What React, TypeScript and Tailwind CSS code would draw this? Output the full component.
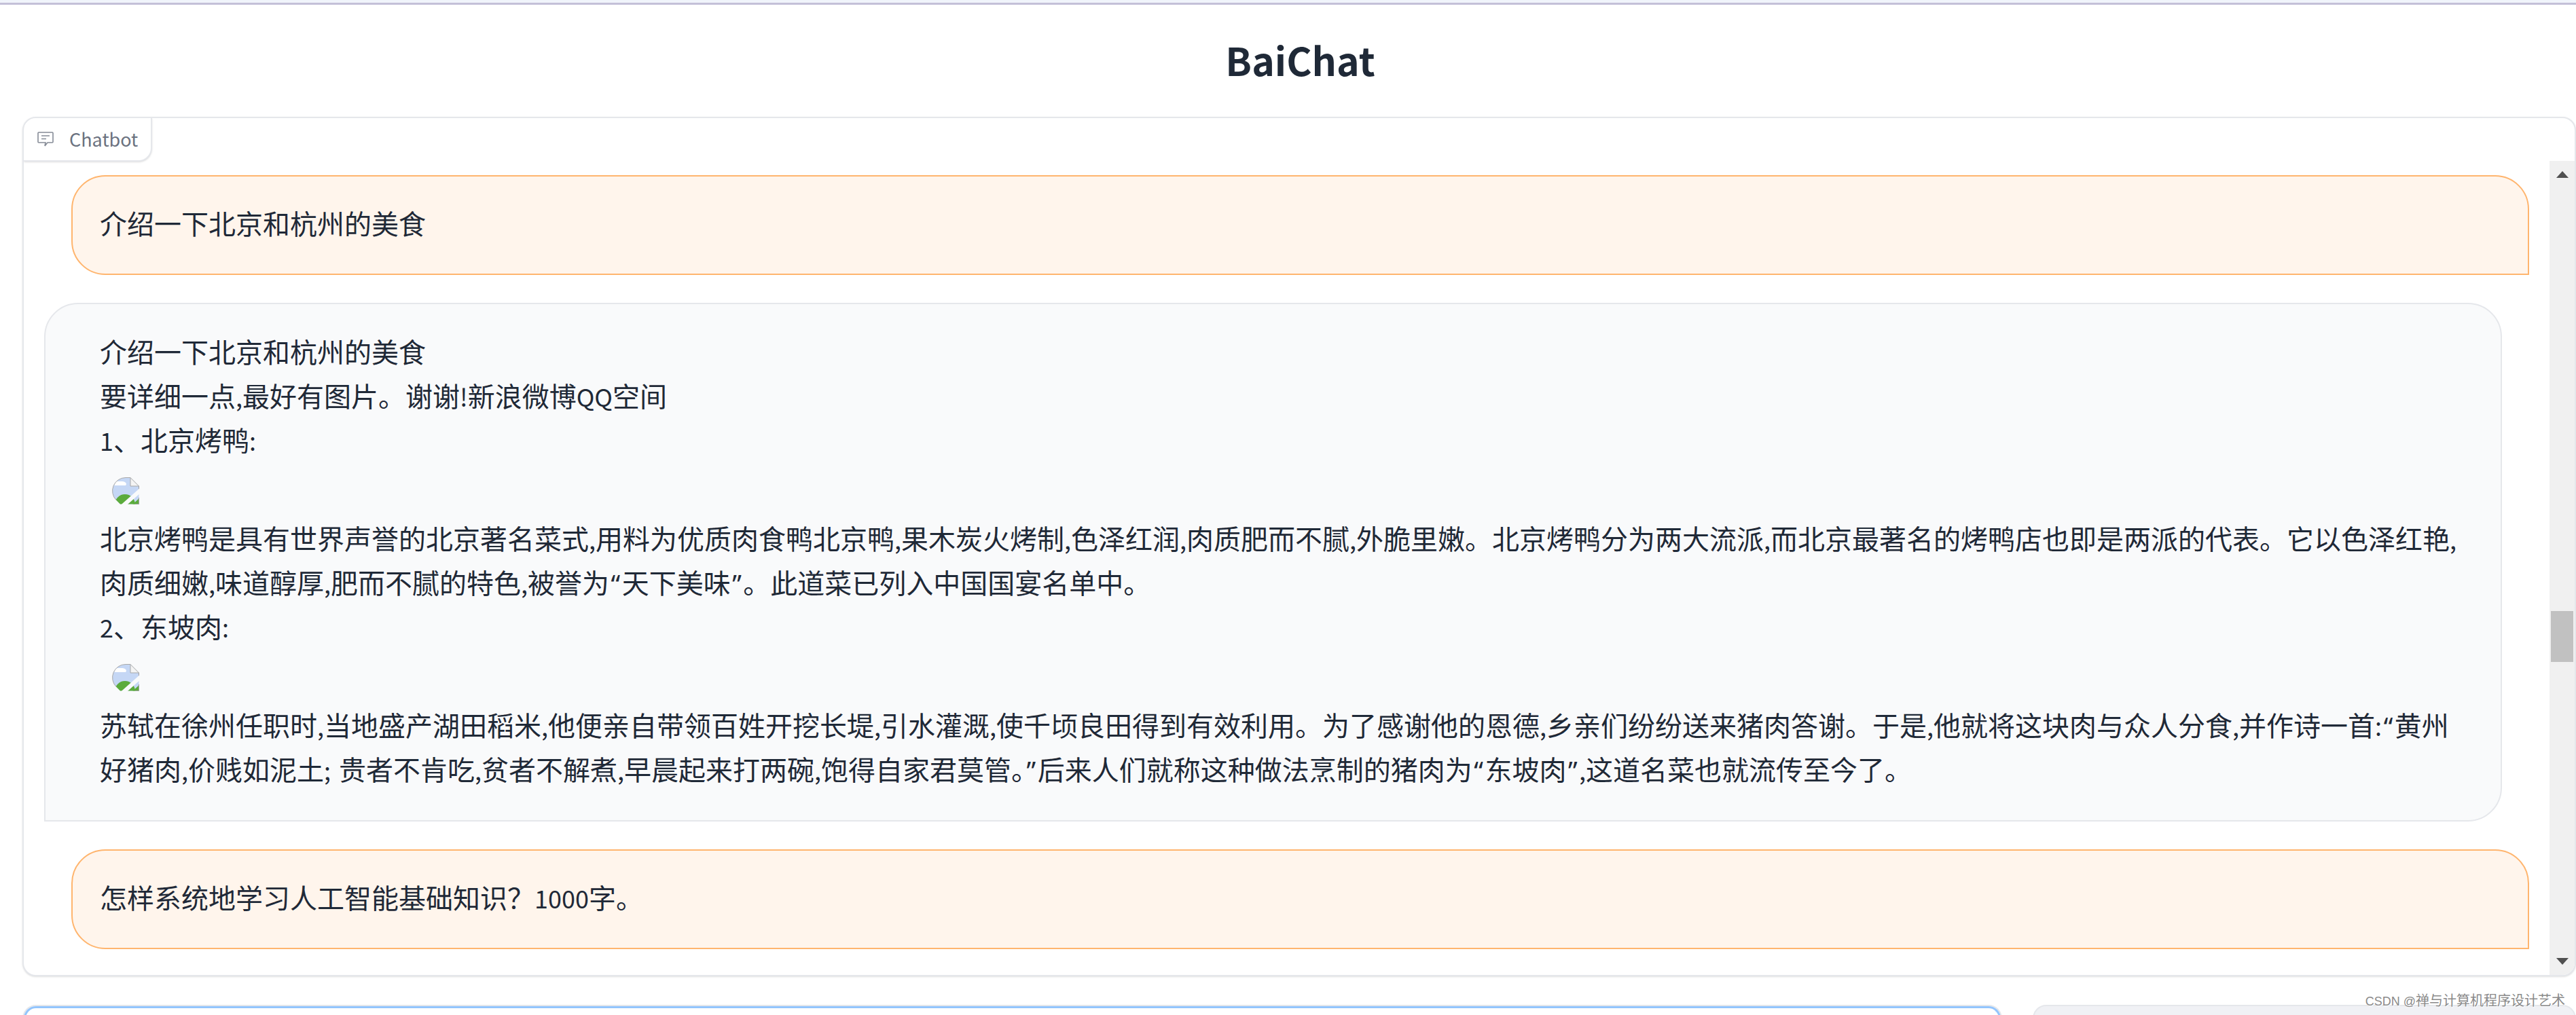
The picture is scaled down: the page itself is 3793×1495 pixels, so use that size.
import React from 'react';

const FONT = "font-['Noto_Sans_CJK_SC','Noto_Sans',sans-serif]";

// latin runs are set a bit smaller, the CJK font's latin glyphs run wide
const Mixed = ({ text }: { text: string }) => (
  <>
    {text.split(/([A-Za-z0-9,.:!]+|[“”;])/).map((part, i) => {
      if (part === '“' || part === '”') {
        return <span key={i} className="px-[2.5px] font-['Noto_Sans',sans-serif] text-[38px] leading-none">{part}</span>;
      }
      if (part === ';') {
        return <span key={i} className="pr-[12px] text-[36px] leading-none">{part}</span>;
      }
      if (i % 2 === 1) {
        return <span key={i} className="text-[36px] leading-none">{part}</span>;
      }
      return part;
    })}
  </>
);

const BrokenImage = () => (
  <div className="ml-[18px] box-content h-[40px] w-[40px] pb-[17px] pt-[23px]">
    <svg width="40" height="40" viewBox="0 0 40 40">
      <defs>
        <clipPath id="page">
          <path d="M27 0.5H20A19.5 19.5 0 0 0 6 33.5L12 39.5H39.5V13Z" />
        </clipPath>
      </defs>
      <g clipPath="url(#page)">
        <rect width="40" height="40" fill="#c5d7f5" />
        <path d="M3 10a6 4 0 0 1 6-4h5a6 4 0 0 1 6 6H4z" fill="#fff" />
        <ellipse cx="19" cy="40" rx="15" ry="15" fill="#5bab3c" />
        <path d="M30 40 L40 31 V40Z" fill="#5bab3c" />
      </g>
      <path d="M27 0.5H20A19.5 19.5 0 0 0 6 33.5" fill="none" stroke="#a8a8a8" strokeWidth="1" />
      <path d="M27 0.5V13H39.5Z" fill="#f4f4f4" stroke="#a8a8a8" strokeWidth="1" />
      <path d="M39.5 13V20M39.5 30V39.5H34" fill="none" stroke="#a0a0a0" strokeWidth="1" />
      <path d="M16 42L42 19" stroke="#f9fafb" strokeWidth="6" />
    </svg>
  </div>
);

const UserBubble = ({ text }: { text: string }) => (
  <div className="ml-[70px] mr-[30px] rounded-[50px] rounded-br-none border-[2.5px] border-[#ffb56e] bg-[#fff5ec] px-[40px] pb-[42px] pt-[36px] text-[40px] leading-[65px] text-[#1f2937]">
    <Mixed text={text} />
  </div>
);

const BotBubble = ({ children }: { children: React.ReactNode }) => (
  <div className="ml-[30px] mr-[70px] rounded-[50px] rounded-bl-none border-[2.5px] border-[#e5e7eb] bg-[#f9fafb] pb-[43px] pl-[80px] pr-[46px] pt-[37px] text-[40px] leading-[65px] text-[#1f2937]">
    {children}
  </div>
);

const ScrollBar = () => (
  <div className="relative flex w-[37px] flex-col items-center justify-between bg-[#f0f0f0] py-[15px]">
    <svg width="18" height="10" viewBox="0 0 18 10">
      <path d="M9 0L18 10H0Z" fill="#505050" />
    </svg>
    <svg width="18" height="10" viewBox="0 0 18 10">
      <path d="M0 0H18L9 10Z" fill="#505050" />
    </svg>
    <div className="absolute left-[2px] top-[663px] h-[75px] w-[33px] bg-[#c1c1c1]" />
  </div>
);

export default function App() {
  return (
    <div className={`relative flex h-[1495px] w-[3793px] flex-col overflow-hidden bg-white ${FONT}`}>
      <div className="h-[7px] shrink-0 border-b-[3px] border-[#c4c0d8] bg-[#f0f4fb]" />
      <h1 className="mt-[42px] pl-[36px] text-center text-[57px] font-semibold leading-[76px] text-[#1f2937]">BaiChat</h1>

      <div className="relative ml-[33px] mt-[47px] flex h-[1266px] w-[3760px] shrink-0 flex-col overflow-hidden rounded-[20px] border-[2.5px] border-[#e5e7eb] bg-white shadow-sm">
        <div className="absolute left-0 top-0 z-10 flex h-[64px] w-[189px] items-center gap-[23px] rounded-br-[20px] border-b-[2.5px] border-r-[2.5px] border-[#e5e7eb] bg-white pl-[20px] text-[27px] text-[#6b7280] shadow-sm">
          <svg width="24" height="22" viewBox="0 0 24 22" fill="none" stroke="#858b96" strokeWidth="1.6">
            <path d="M2 1H22A1 1 0 0 1 23 2V15A1 1 0 0 1 22 16H15L11 21L12 16H2A1 1 0 0 1 1 15V2A1 1 0 0 1 2 1Z" />
            <path d="M6 6H18M6 10.5H13" />
          </svg>
          <span>Chatbot</span>
        </div>

        <div className="mt-[63px] flex min-h-0 flex-1">
          <div className="flex flex-1 flex-col gap-[41px] pt-[21px]">
            <UserBubble text="介绍一下北京和杭州的美食" />
            <BotBubble>
              <p>介绍一下北京和杭州的美食</p>
              <p><Mixed text="要详细一点,最好有图片。谢谢!新浪微博QQ空间" /></p>
              <p><Mixed text="1、北京烤鸭:" /></p>
              <BrokenImage />
              <p><Mixed text="北京烤鸭是具有世界声誉的北京著名菜式,用料为优质肉食鸭北京鸭,果木炭火烤制,色泽红润,肉质肥而不腻,外脆里嫩。北京烤鸭分为两大流派,而北京最著名的烤鸭店也即是两派的代表。它以色泽红艳,肉质细嫩,味道醇厚,肥而不腻的特色,被誉为“天下美味”。此道菜已列入中国国宴名单中。" /></p>
              <p><Mixed text="2、东坡肉:" /></p>
              <BrokenImage />
              <p><Mixed text="苏轼在徐州任职时,当地盛产湖田稻米,他便亲自带领百姓开挖长堤,引水灌溉,使千顷良田得到有效利用。为了感谢他的恩德,乡亲们纷纷送来猪肉答谢。于是,他就将这块肉与众人分食,并作诗一首:“黄州好猪肉,价贱如泥土;贵者不肯吃,贫者不解煮,早晨起来打两碗,饱得自家君莫管。”后来人们就称这种做法烹制的猪肉为“东坡肉”,这道名菜也就流传至今了。" /></p>
            </BotBubble>
            <UserBubble text="怎样系统地学习人工智能基础知识？1000字。" />
          </div>
          <ScrollBar />
        </div>
      </div>

      <div className="ml-[33px] mt-[42px] flex shrink-0 gap-[45px]">
        <div className="h-[60px] w-[2915px] rounded-t-[20px] border-[2.5px] border-[#e5e7eb] bg-white">
          <div className="h-full rounded-t-[18px] border-l-[3px] border-r-[3px] border-t-[3px] border-[#93c5fd]" />
        </div>
        <div className="h-[60px] flex-1 rounded-t-[20px] border-[2.5px] border-[#e5e7eb] bg-[#f0f1f5]" />
      </div>

      <span className="absolute bottom-[7px] right-[16px] font-['Liberation_Sans','Noto_Sans_CJK_SC',sans-serif] text-[20px] leading-[26px] text-[#8a8a8a] [text-shadow:1px_1px_1px_#ffffff]">
        <span className="text-[18px]">CSDN @</span>禅与计算机程序设计艺术
      </span>
    </div>
  );
}
